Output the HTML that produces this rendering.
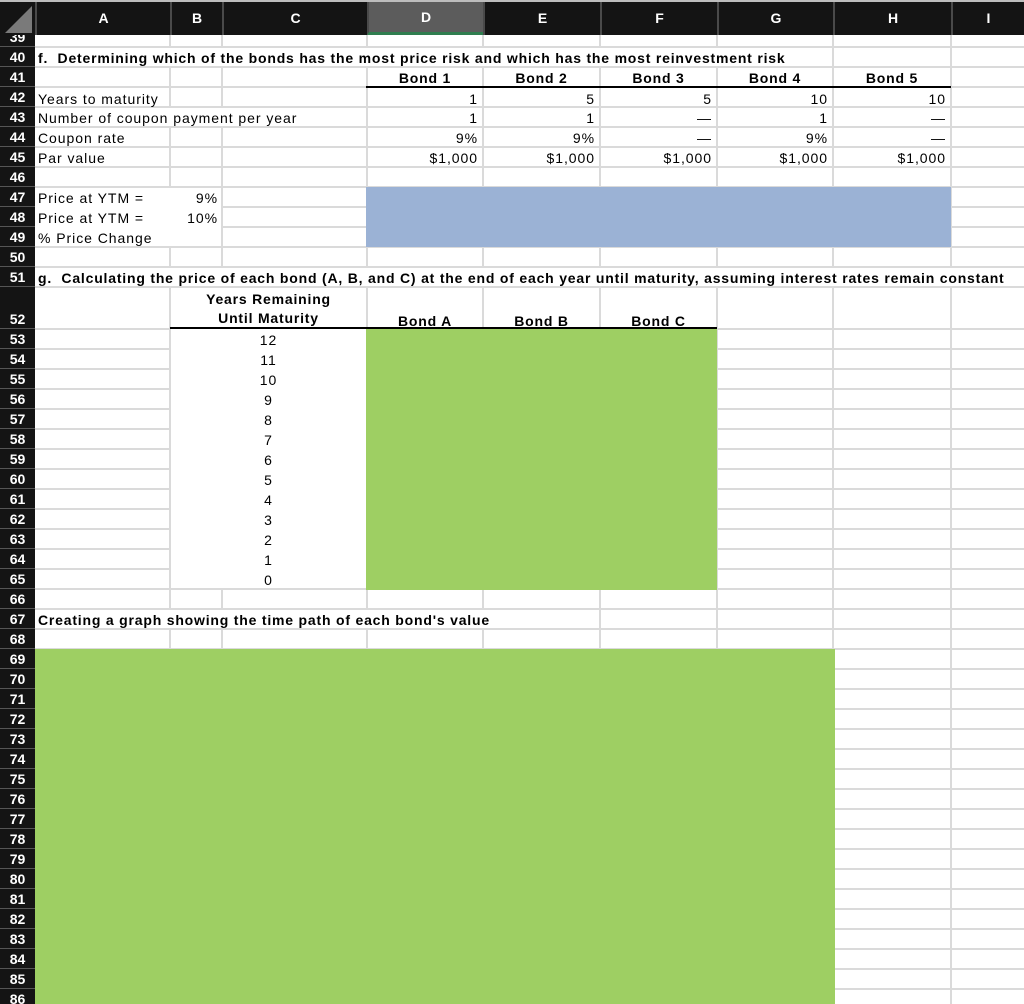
<!DOCTYPE html>
<html><head><meta charset="utf-8"><style>
*{margin:0;padding:0;box-sizing:border-box}
body{width:1024px;height:1004px;overflow:hidden;background:#fff;font-family:"Liberation Sans",Arial,sans-serif;font-size:14px;letter-spacing:0.95px;color:#000;position:relative}
.a{position:absolute}
.hl{position:absolute;left:35px;right:0;height:2px;background:#dadada}
.vl{position:absolute;width:2px;background:#dadada;top:35px;bottom:0}
.w{position:absolute;background:#fff}
.t{position:absolute;height:20px;line-height:20px;white-space:nowrap;margin-top:1px}
.r{text-align:right}.c{text-align:center}.b{font-weight:bold;letter-spacing:0.8px}
#rh{position:absolute;left:0;top:35px;width:35px;bottom:0;background:#141414;overflow:hidden;letter-spacing:0}
#rh div{position:absolute;left:0;width:35px;color:#fff;font-weight:bold;font-size:14px;text-align:center;border-bottom:1px solid #555}
#ch{position:absolute;left:0;top:0;width:1024px;height:35px;background:#141414;border-top:2px solid #bdbdbd;letter-spacing:0}
#ch div{position:absolute;top:0;height:33px;line-height:33px;color:#fff;text-align:center;font-size:14px;font-weight:bold;border-left:2px solid #4a4a4a}
</style></head><body>

<div class="hl" style="top:46px"></div><div class="hl" style="top:66px"></div><div class="hl" style="top:86px"></div><div class="hl" style="top:106px"></div><div class="hl" style="top:126px"></div><div class="hl" style="top:146px"></div><div class="hl" style="top:166px"></div><div class="hl" style="top:186px"></div><div class="hl" style="top:206px"></div><div class="hl" style="top:226px"></div><div class="hl" style="top:246px"></div><div class="hl" style="top:266px"></div><div class="hl" style="top:286px"></div><div class="hl" style="top:328px"></div><div class="hl" style="top:348px"></div><div class="hl" style="top:368px"></div><div class="hl" style="top:388px"></div><div class="hl" style="top:408px"></div><div class="hl" style="top:428px"></div><div class="hl" style="top:448px"></div><div class="hl" style="top:468px"></div><div class="hl" style="top:488px"></div><div class="hl" style="top:508px"></div><div class="hl" style="top:528px"></div><div class="hl" style="top:548px"></div><div class="hl" style="top:568px"></div><div class="hl" style="top:588px"></div><div class="hl" style="top:608px"></div><div class="hl" style="top:628px"></div><div class="hl" style="top:648px"></div><div class="hl" style="top:668px"></div><div class="hl" style="top:688px"></div><div class="hl" style="top:708px"></div><div class="hl" style="top:728px"></div><div class="hl" style="top:748px"></div><div class="hl" style="top:768px"></div><div class="hl" style="top:788px"></div><div class="hl" style="top:808px"></div><div class="hl" style="top:828px"></div><div class="hl" style="top:848px"></div><div class="hl" style="top:868px"></div><div class="hl" style="top:888px"></div><div class="hl" style="top:908px"></div><div class="hl" style="top:928px"></div><div class="hl" style="top:948px"></div><div class="hl" style="top:968px"></div><div class="hl" style="top:988px"></div>
<div class="vl" style="left:169px"></div><div class="vl" style="left:221px"></div><div class="vl" style="left:366px"></div><div class="vl" style="left:482px"></div><div class="vl" style="left:599px"></div><div class="vl" style="left:716px"></div><div class="vl" style="left:832px"></div><div class="vl" style="left:950px"></div>

<div class="w" style="left:35px;top:48px;width:797px;height:18px"></div>
<div class="w" style="left:35px;top:108px;width:331px;height:18px"></div>
<div class="w" style="left:35px;top:188px;width:186px;height:58px"></div>
<div class="w" style="left:35px;top:268px;width:989px;height:18px"></div>
<div class="w" style="left:171px;top:288px;width:195px;height:300px"></div>
<div class="w" style="left:35px;top:610px;width:564px;height:18px"></div>

<div class="a" style="left:366px;top:187px;width:585px;height:60px;background:#9bb2d5"></div>
<div class="a" style="left:366px;top:329px;width:351px;height:261px;background:#9ecf63"></div>
<div class="a" style="left:35px;top:649px;width:800px;height:355px;background:#9ecf63"></div>

<div class="a" style="left:366px;top:86px;width:585px;height:2px;background:#000"></div>
<div class="a" style="left:170px;top:327px;width:547px;height:2px;background:#000"></div>

<div class="t b" style="left:38px;top:47px">f.&nbsp; Determining which of the bonds has the most price risk and which has the most reinvestment risk</div>
<div class="t b c" style="left:367px;top:67px;width:116px">Bond 1</div>
<div class="t b c" style="left:483px;top:67px;width:117px">Bond 2</div>
<div class="t b c" style="left:600px;top:67px;width:117px">Bond 3</div>
<div class="t b c" style="left:717px;top:67px;width:116px">Bond 4</div>
<div class="t b c" style="left:833px;top:67px;width:118px">Bond 5</div>

<div class="t" style="left:38px;top:88px">Years to maturity</div>
<div class="t" style="left:38px;top:107px">Number of coupon payment per year</div>
<div class="t" style="left:38px;top:127px">Coupon rate</div>
<div class="t" style="left:38px;top:147px">Par value</div>

<div class="t r" style="left:367px;width:111px;top:88px">1</div>
<div class="t r" style="left:483px;width:112px;top:88px">5</div>
<div class="t r" style="left:600px;width:112px;top:88px">5</div>
<div class="t r" style="left:717px;width:111px;top:88px">10</div>
<div class="t r" style="left:833px;width:113px;top:88px">10</div>

<div class="t r" style="left:367px;width:111px;top:107px">1</div>
<div class="t r" style="left:483px;width:112px;top:107px">1</div>
<div class="t r" style="left:600px;width:112px;top:107px">—</div>
<div class="t r" style="left:717px;width:111px;top:107px">1</div>
<div class="t r" style="left:833px;width:113px;top:107px">—</div>

<div class="t r" style="left:367px;width:111px;top:127px">9%</div>
<div class="t r" style="left:483px;width:112px;top:127px">9%</div>
<div class="t r" style="left:600px;width:112px;top:127px">—</div>
<div class="t r" style="left:717px;width:111px;top:127px">9%</div>
<div class="t r" style="left:833px;width:113px;top:127px">—</div>

<div class="t r" style="left:367px;width:111px;top:147px">$1,000</div>
<div class="t r" style="left:483px;width:112px;top:147px">$1,000</div>
<div class="t r" style="left:600px;width:112px;top:147px">$1,000</div>
<div class="t r" style="left:717px;width:111px;top:147px">$1,000</div>
<div class="t r" style="left:833px;width:113px;top:147px">$1,000</div>

<div class="t" style="left:38px;top:187px">Price at YTM =</div>
<div class="t" style="left:38px;top:207px">Price at YTM =</div>
<div class="t" style="left:38px;top:227px">% Price Change</div>
<div class="t r" style="left:170px;width:48px;top:187px">9%</div>
<div class="t r" style="left:170px;width:48px;top:207px">10%</div>

<div class="t b" style="left:38px;top:267px">g.&nbsp; Calculating the price of each bond (A, B, and C) at the end of each year until maturity, assuming interest rates remain constant</div>
<div class="t b c" style="left:170px;width:197px;top:288px">Years Remaining</div>
<div class="t b c" style="left:170px;width:197px;top:307px">Until Maturity</div>
<div class="t b c" style="left:367px;width:116px;top:310px">Bond A</div>
<div class="t b c" style="left:483px;width:117px;top:310px">Bond B</div>
<div class="t b c" style="left:600px;width:117px;top:310px">Bond C</div>

<div class="t c" style="left:170px;width:197px;top:329px">12</div>
<div class="t c" style="left:170px;width:197px;top:349px">11</div>
<div class="t c" style="left:170px;width:197px;top:369px">10</div>
<div class="t c" style="left:170px;width:197px;top:389px">9</div>
<div class="t c" style="left:170px;width:197px;top:409px">8</div>
<div class="t c" style="left:170px;width:197px;top:429px">7</div>
<div class="t c" style="left:170px;width:197px;top:449px">6</div>
<div class="t c" style="left:170px;width:197px;top:469px">5</div>
<div class="t c" style="left:170px;width:197px;top:489px">4</div>
<div class="t c" style="left:170px;width:197px;top:509px">3</div>
<div class="t c" style="left:170px;width:197px;top:529px">2</div>
<div class="t c" style="left:170px;width:197px;top:549px">1</div>
<div class="t c" style="left:170px;width:197px;top:569px">0</div>

<div class="t b" style="left:38px;top:609px">Creating a graph showing the time path of each bond's value</div>

<div id="ch">
<svg class="a" style="left:0;top:0" width="35" height="33"><polygon points="32,4 32,31 5,31" fill="#7a7a7a"/></svg>
<div style="left:35px;width:135px">A</div>
<div style="left:170px;width:52px">B</div>
<div style="left:222px;width:145px">C</div>
<div style="left:367px;width:116px;background:#5c5c5c;border-bottom:3px solid #2f7d4f;line-height:30px">D</div>
<div style="left:483px;width:117px">E</div>
<div style="left:600px;width:117px">F</div>
<div style="left:717px;width:116px">G</div>
<div style="left:833px;width:118px">H</div>
<div style="left:951px;width:73px">I</div>
</div>

<div id="rh">
<div style="top:-8px;height:20px;line-height:20px">39</div>
<div style="top:12px;height:20px;line-height:20px">40</div>
<div style="top:32px;height:20px;line-height:20px">41</div>
<div style="top:52px;height:20px;line-height:20px">42</div>
<div style="top:72px;height:20px;line-height:20px">43</div>
<div style="top:92px;height:20px;line-height:20px">44</div>
<div style="top:112px;height:20px;line-height:20px">45</div>
<div style="top:132px;height:20px;line-height:20px">46</div>
<div style="top:152px;height:20px;line-height:20px">47</div>
<div style="top:172px;height:20px;line-height:20px">48</div>
<div style="top:192px;height:20px;line-height:20px">49</div>
<div style="top:212px;height:20px;line-height:20px">50</div>
<div style="top:232px;height:20px;line-height:20px">51</div>
<div style="top:252px;height:42px;line-height:20px;padding-top:22px">52</div>
<div style="top:294px;height:20px;line-height:20px">53</div>
<div style="top:314px;height:20px;line-height:20px">54</div>
<div style="top:334px;height:20px;line-height:20px">55</div>
<div style="top:354px;height:20px;line-height:20px">56</div>
<div style="top:374px;height:20px;line-height:20px">57</div>
<div style="top:394px;height:20px;line-height:20px">58</div>
<div style="top:414px;height:20px;line-height:20px">59</div>
<div style="top:434px;height:20px;line-height:20px">60</div>
<div style="top:454px;height:20px;line-height:20px">61</div>
<div style="top:474px;height:20px;line-height:20px">62</div>
<div style="top:494px;height:20px;line-height:20px">63</div>
<div style="top:514px;height:20px;line-height:20px">64</div>
<div style="top:534px;height:20px;line-height:20px">65</div>
<div style="top:554px;height:20px;line-height:20px">66</div>
<div style="top:574px;height:20px;line-height:20px">67</div>
<div style="top:594px;height:20px;line-height:20px">68</div>
<div style="top:614px;height:20px;line-height:20px">69</div>
<div style="top:634px;height:20px;line-height:20px">70</div>
<div style="top:654px;height:20px;line-height:20px">71</div>
<div style="top:674px;height:20px;line-height:20px">72</div>
<div style="top:694px;height:20px;line-height:20px">73</div>
<div style="top:714px;height:20px;line-height:20px">74</div>
<div style="top:734px;height:20px;line-height:20px">75</div>
<div style="top:754px;height:20px;line-height:20px">76</div>
<div style="top:774px;height:20px;line-height:20px">77</div>
<div style="top:794px;height:20px;line-height:20px">78</div>
<div style="top:814px;height:20px;line-height:20px">79</div>
<div style="top:834px;height:20px;line-height:20px">80</div>
<div style="top:854px;height:20px;line-height:20px">81</div>
<div style="top:874px;height:20px;line-height:20px">82</div>
<div style="top:894px;height:20px;line-height:20px">83</div>
<div style="top:914px;height:20px;line-height:20px">84</div>
<div style="top:934px;height:20px;line-height:20px">85</div>
<div style="top:954px;height:20px;line-height:20px">86</div>
</div>
</body></html>
